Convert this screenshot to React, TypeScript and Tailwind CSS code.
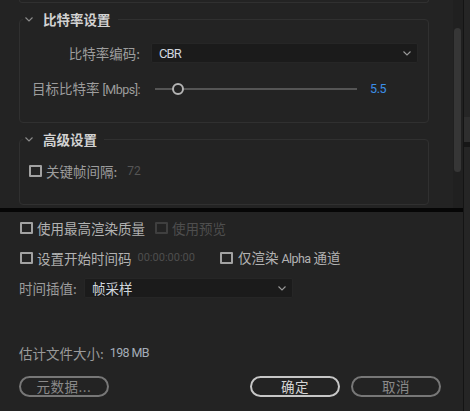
import clsx from "clsx"

const cn = clsx

const Chevron = ({ className }: { className?: string }) => (
  <svg width="8" height="5" viewBox="0 0 8 5" className={className} fill="none">
    <polyline points="0.5,0.5 4,4 7.5,0.5" stroke="currentColor" strokeWidth="1.1" />
  </svg>
)

// tighter latin face for numbers and codes inside CJK labels
const Latin = ({ children, className }: { children: React.ReactNode; className?: string }) => (
  <span className={cn("font-['Roboto','Noto_Sans',sans-serif]", className)}>{children}</span>
)

const Check = ({ dim }: { dim?: boolean }) => (
  <span
    className={cn(
      "inline-block h-[12px] w-[13px] shrink-0 rounded-[1px] border-2",
      dim ? "border-[#3f3f3f]" : "border-[#a2a2a2]"
    )}
  />
)

const Section = ({ title, children }: { title: string; children: React.ReactNode }) => (
  <fieldset className="ml-[19px] mt-[7px] w-[410px] rounded-[4px] border border-[#303030]">
    <legend className="ml-[3px] flex h-[18px] items-center gap-[10px] pl-[2px] pr-[7px]">
      <Chevron className="text-[#8c8c8c]" />
      <span className="text-[13.5px] font-bold leading-[18px] text-[#d2d2d2]">{title}</span>
    </legend>
    {children}
  </fieldset>
)

const Select = ({ children, className }: { children: React.ReactNode; className?: string }) => (
  <div
    className={cn(
      "flex h-[20px] items-center justify-between rounded-[2px] border border-[#262626] bg-[#1b1b1b] pl-[7px] pr-[6px]",
      className
    )}
  >
    <span className="text-[13.5px] leading-[18px] text-[#d0d6dd]">{children}</span>
    <Chevron className="text-[#9a9a9a]" />
  </div>
)

const Pill = ({ label, tone }: { label: string; tone: "main" | "soft" }) => (
  <button
    className={cn(
      "flex h-[21px] w-[90px] items-center justify-center rounded-full border-2 text-[13.5px] leading-[17px] tracking-[0.5px]",
      tone === "main" ? "border-[#c6c6c6] text-[#d4d4d4]" : "border-[#777] text-[#8a8a8a]"
    )}
  >
    {label}
  </button>
)

export default function App() {
  return (
    <div className="flex h-[411px] w-[470px] overflow-hidden bg-[#232323] font-['Noto_Sans_CJK_SC','Noto_Sans',sans-serif]">
      <div className="flex w-[463px] flex-col">
        {/* scrolling settings area */}
        <div className="flex h-[208px] overflow-hidden">
          <div className="w-[453px]">
            <div className="ml-[19px] h-[3px] w-[410px] rounded-b-[4px] border-x border-b border-[#303030]" />

            <Section title="比特率设置">
              <div className="mt-[15px] flex h-[20px] items-center">
                <span className="w-[120px] text-right text-[13.5px] leading-[18px] text-[#9d9d9d]">比特率编码:</span>
                <Select className="ml-[11px] w-[267px]">
                  <Latin className="text-[13px] tracking-[-0.9px]">CBR</Latin>
                </Select>
              </div>
              <div className="mb-[23px] mt-[16px] flex h-[20px] items-center">
                <span className="w-[120px] whitespace-nowrap text-right text-[13.5px] leading-[18px] text-[#9d9d9d]">
                  目标比特率 <Latin className="text-[12.5px] tracking-[-0.5px]">[Mbps]:</Latin>
                </span>
                <div className="relative ml-[15px] h-[2px] w-[202px] bg-[#555]">
                  <span className="absolute left-[17px] top-[-5px] h-[12px] w-[12px] rounded-full border-2 border-[#b4b4b4] bg-[#232323]" />
                </div>
                <Latin className="ml-[13px] text-[12.5px] leading-[18px] tracking-[-0.4px] text-[#3b8fe8]">5.5</Latin>
              </div>
            </Section>

            <Section title="高级设置">
              <div className="mb-[24px] ml-[9px] mt-[14px] flex h-[18px] items-center gap-[4px]">
                <Check />
                <span className="text-[13.5px] leading-[18px] text-[#9d9d9d]">关键帧间隔:</span>
                <Latin className="ml-[6px] text-[12px] leading-[18px] text-[#555]">72</Latin>
              </div>
            </Section>
          </div>

          {/* scrollbar */}
          <div className="w-[10px] bg-[#202020] pl-[1px] pt-[28px]">
            <div className="h-[144px] w-[7px] rounded-full bg-[#363636]" />
          </div>
        </div>

        <div className="h-[4px] bg-[#060606]" />

        {/* output options */}
        <div className="flex flex-1 flex-col pl-[20px] pr-[22px] pt-[7px] text-[13.5px] leading-[18px]">
          <div className="flex h-[18px] items-center">
            <Check />
            <span className="ml-[4px] text-[#b2b2b2]">使用最高渲染质量</span>
            <span className="ml-[10px]">
              <Check dim />
            </span>
            <span className="ml-[4px] text-[#4e4e4e]">使用预览</span>
          </div>

          <div className="mt-[12px] flex h-[18px] items-center">
            <Check />
            <span className="ml-[4px] text-[#b2b2b2]">设置开始时间码</span>
            <Latin className="ml-[6px] text-[11px] text-[#4e4e4e]">00:00:00:00</Latin>
            <span className="ml-[25px]">
              <Check />
            </span>
            <span className="ml-[5px] whitespace-pre text-[#b2b2b2]">
              仅渲染 <Latin className="text-[12.5px] tracking-[-0.6px]">Alpha</Latin> 通道
            </span>
          </div>

          <div className="-ml-[1px] mt-[11px] flex h-[20px] items-center">
            <span className="w-[65px] text-[#9d9d9d]">时间插值:</span>
            <Select className="w-[209px]">帧采样</Select>
          </div>

          <div className="-ml-[1px] mt-[46px] flex h-[18px] items-center">
            <span className="text-[#9a9a9a]">估计文件大小:</span>
            <Latin className="ml-[6px] text-[12.5px] tracking-[-0.6px] text-[#a3adb8]">198 MB</Latin>
          </div>

          <div className="-ml-[1px] mt-[14px] flex items-center">
            <Pill label="元数据..." tone="soft" />
            <div className="ml-auto flex gap-[11px]">
              <Pill label="确定" tone="main" />
              <Pill label="取消" tone="soft" />
            </div>
          </div>
        </div>
      </div>

      {/* neighbouring panel edge */}
      <div className="w-[1px] bg-[#141414]" />
      <div className="flex w-[6px] flex-col bg-[#252525] pt-[117px]">
        <div className="h-[25px] bg-[#2e2e2e]" />
        <div className="h-[5px] bg-[#161616]" />
      </div>
    </div>
  )
}
